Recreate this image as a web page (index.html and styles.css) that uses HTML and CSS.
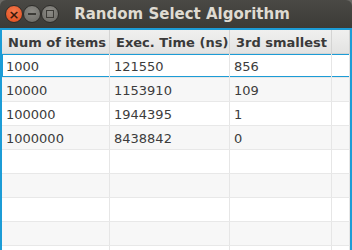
FILE: index.html
```html
<!DOCTYPE html>
<html lang="en">
<head>
    <meta charset="UTF-8">
    <title>Random Select Algorithm</title>
    <link rel="stylesheet" href="styles.css">
</head>
<body>
<div class="window">
    <div class="titlebar">
        <div class="controls">
            <span class="btn close">&#215;</span>
            <span class="btn min"><i class="dash"></i></span>
            <span class="btn max"><i class="box"></i></span>
        </div>
        <div class="title">Random Select Algorithm</div>
    </div>

    <div class="table">
        <div class="row head">
            <div class="cell">Num of items</div>
            <div class="cell">Exec. Time (ns)</div>
            <div class="cell">3rd smallest</div>
            <div class="cell"></div>
        </div>
        <div class="row selected">
            <div class="cell">1000</div>
            <div class="cell">121550</div>
            <div class="cell">856</div>
            <div class="cell"></div>
        </div>
        <div class="row odd">
            <div class="cell">10000</div>
            <div class="cell">1153910</div>
            <div class="cell">109</div>
            <div class="cell"></div>
        </div>
        <div class="row">
            <div class="cell">100000</div>
            <div class="cell">1944395</div>
            <div class="cell">1</div>
            <div class="cell"></div>
        </div>
        <div class="row odd">
            <div class="cell">1000000</div>
            <div class="cell">8438842</div>
            <div class="cell">0</div>
            <div class="cell"></div>
        </div>
        <div class="row"><div class="cell"></div><div class="cell"></div><div class="cell"></div><div class="cell"></div></div>
        <div class="row odd"><div class="cell"></div><div class="cell"></div><div class="cell"></div><div class="cell"></div></div>
        <div class="row"><div class="cell"></div><div class="cell"></div><div class="cell"></div><div class="cell"></div></div>
        <div class="row odd"><div class="cell"></div><div class="cell"></div><div class="cell"></div><div class="cell"></div></div>
        <div class="row"><div class="cell"></div><div class="cell"></div><div class="cell"></div><div class="cell"></div></div>
    </div>
</div>
</body>
</html>
```

FILE: styles.css
```css
body {
    margin: 0;
    background-color: #6b6a66;
    font-family: "DejaVu Sans", sans-serif;
    overflow: hidden;
}

.window {
    width: 352px;
    height: 250px;
    overflow: hidden;
}

.titlebar {
    height: 28px;
    background: linear-gradient(#4a4945, #3c3b37);
    border-radius: 6px 6px 0 0;
    display: flex;
    align-items: center;
    position: relative;
}

.controls {
    display: flex;
    padding-left: 5px;
}

.btn {
    width: 18px;
    height: 18px;
    border-radius: 50%;
    display: flex;
    align-items: center;
    justify-content: center;
    box-sizing: border-box;
    border: 1px solid #2e2d2a;
}

.close {
    background: radial-gradient(circle at 50% 35%, #f47b4f, #df4a1a);
    color: #3b1a0c;
    font-size: 13px;
    font-weight: bold;
    line-height: 1;
}

.min,
.max {
    background: radial-gradient(circle at 50% 35%, #8c8b86, #6a6964);
}

.dash {
    width: 8px;
    height: 2px;
    background: #3c3b37;
}

.box {
    width: 6px;
    height: 6px;
    border: 1px solid #3c3b37;
}

.title {
    position: absolute;
    left: 0;
    right: 0;
    text-align: center;
    color: #dfdbd2;
    font-weight: bold;
    font-size: 15px;
    padding-left: 12px;
}

.table {
    height: 222px;
    background: #ffffff;
    border: 2px solid #1c9cd6;
    border-bottom: none;
    box-sizing: border-box;
    overflow: hidden;
}

.row {
    display: grid;
    grid-template-columns: 108px 120px 102px 1fr;
    height: 24px;
    border-bottom: 1px solid #e8e8e8;
    box-sizing: border-box;
    font-size: 13px;
    color: #3c3c3c;
}

.row.odd {
    background: #f7f7f7;
}

.row.head {
    background: linear-gradient(#f0f0ef, #e3e3e2);
    border-bottom: 1px solid #d4d4d3;
    font-weight: bold;
    color: #3a3a3a;
}

.row.selected {
    box-shadow: inset 0 0 0 1px #1c9cd6;
}

.cell {
    border-right: 1px solid #e6e6e6;
    padding: 1px 4px 0;
    line-height: 23px;
    white-space: nowrap;
    overflow: hidden;
}

.head .cell {
    border-right-color: #d4d4d3;
    padding-left: 6px;
}
```
